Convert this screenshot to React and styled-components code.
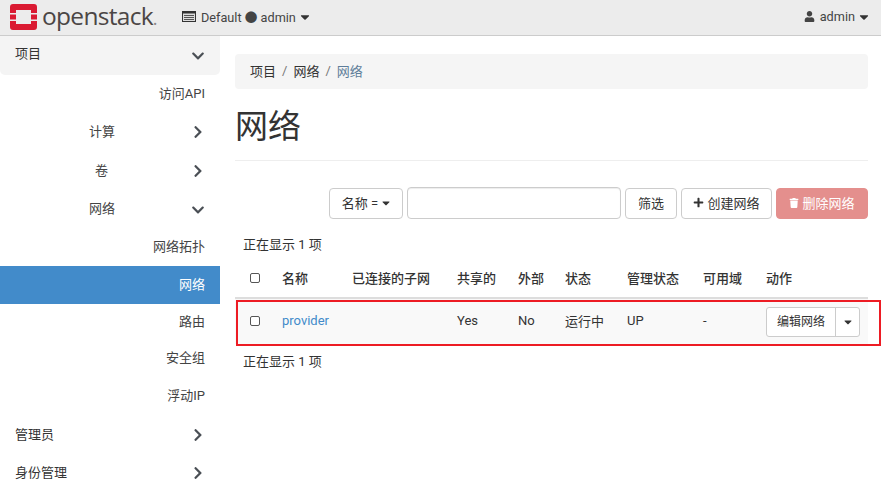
import React from "react";
import styled, { createGlobalStyle } from "styled-components";
import { FaChevronDown, FaChevronRight, FaUser, FaPlus, FaTrash, FaCaretDown } from "react-icons/fa";

const Global = createGlobalStyle`
  html, body { margin: 0; padding: 0; background: #fff; }
  body { font-family: Roboto, "Noto Sans CJK SC", sans-serif; font-size: 13px; color: #333; overflow: hidden; }
  * { box-sizing: border-box; }
`;

const Page = styled.div`width: 881px; height: 485px; overflow: hidden; position: relative;`;

const Topbar = styled.header`
  height: 36px; display: flex; align-items: center; background: #ececec;
  border-bottom: 1px solid #ccc; padding: 0 12px 2px 10px;
`;
const Brand = styled.div`display: flex; align-items: center; gap: 5px; width: 172px;`;
const Wordmark = styled.span`
  font-family: "Open Sans", sans-serif; font-weight: 500; font-size: 24.5px; letter-spacing: -0.7px; color: #4b4645; line-height: 1;
`;
const Dot = styled.span`color: #8a8685; font-size: 18px;`;
const TopItem = styled.div`display: flex; align-items: center; gap: 5px; color: #444; font-size: 12.7px;`;
const Spacer = styled.div`flex: 1;`;
const TopCaret = styled(FaCaretDown)`font-size: 14px; color: #333; margin: 0 -2px 0 -3px;`;
const BtnCaret = styled(FaCaretDown)`font-size: 12px; color: #333;`;

const Layout = styled.div`display: flex;`;
const Sidebar = styled.nav`width: 220px; flex: none; display: flex; flex-direction: column;`;
const Group = styled.div`
  height: 39px; flex: none; display: flex; align-items: center; justify-content: space-between;
  padding: 0 15px ${p => p.$pb ?? 1}px; background: ${p => p.$open ? "#f4f4f4" : "transparent"};
  border-radius: 0 0 5px 5px;
`;
const Row = styled.div`
  height: ${p => p.$h}px; flex: none; display: flex; align-items: center; justify-content: flex-end;
  gap: ${p => p.$gap || 0}px; padding: 0 15px ${p => p.$pb ?? 1}px 0;
  background: ${p => p.$active ? "#428bca" : "transparent"};
  color: ${p => p.$active ? "#fff" : "#444"};
`;
const Chev = styled.span`
  width: 15px; display: flex; justify-content: center; color: #4a4f55; font-size: 14px;
  margin-top: ${p => p.$drop || 3}px;
`;

const Main = styled.main`flex: 1; padding: 18px 13px 0 15px; min-width: 0;`;
const Crumbs = styled.div`
  height: 35px; background: #f5f5f5; border-radius: 4px; display: flex; align-items: center; padding: 0 15px 2px; color: #333;
`;
const Sep = styled.span`color: #777; padding: 0 6px;`;
const CrumbLast = styled.span`color: #5e7d9a;`;
const Title = styled.h1`
  margin: 0; height: 72px; font-weight: 400; font-size: 33px; line-height: 75px; color: #333; border-bottom: 1px solid #eee;
`;
const Toolbar = styled.div`display: flex; justify-content: flex-end; gap: 4px; margin-top: 26px; height: 32px;`;
const Btn = styled.button`
  height: 31px; margin-top: 1px; width: ${p => p.$w}px; padding: 0 0 2px ${p => p.$pl || 0}px; display: flex; align-items: center; justify-content: center; gap: ${p => p.$gap ?? 3}px;
  font: inherit; color: ${p => p.$danger ? "#fff" : "#333"}; background: ${p => p.$danger ? "#e48f8d" : "#fff"};
  border: 1px solid ${p => p.$danger ? "#e48f8d" : "#ccc"}; border-radius: 4px;
`;
const SearchInput = styled.input`
  width: 214px; height: 32px; border: 1px solid #ccc; border-radius: 4px; padding: 0 8px; background: #fff;
  box-shadow: inset 0 1px 1px rgba(0,0,0,.075);
`;
const Count = styled.div`height: 18px; line-height: 18px; padding-left: 8px; color: #333; margin-top: ${p => p.$mt}px;`;
const Table = styled.table`width: 633px; border-collapse: collapse; table-layout: fixed; margin-top: 6px;`;
const Th = styled.th`
  padding: 0 0 2px 8px; height: 38px; text-align: left; font-weight: 500; color: #333; border-bottom: 2px solid #ddd;
  vertical-align: middle;
`;
const Td = styled.td`padding: 0 0 2px 8px; height: 46px; background: #f9f9f9; color: #333; vertical-align: middle;`;
const CheckCell = styled.div`display: flex; justify-content: center; padding-right: 8px;`;
const Check = styled.span`
  display: block; width: 10px; height: 10px; border: 1px solid #555; border-radius: 2px; background: #fff;
`;
const Link = styled.a`color: #428bca; text-decoration: none;`;
const BtnGroup = styled.div`
  display: flex; height: 30px; width: 94px; margin-top: 2px; border: 1px solid #ccc; border-radius: 3px; background: #fff;
`;
const EditBtn = styled.div`flex: 1; display: flex; align-items: center; justify-content: center; font-size: 12px; padding-bottom: 2px;`;
const CaretBtn = styled.div`width: 24px; display: flex; align-items: center; justify-content: center; border-left: 1px solid #ccc;`;
const Highlight = styled.div`
  position: absolute; left: 236px; top: 300px; width: 645px; height: 46px; border: 2px solid #ed1c24; pointer-events: none;
`;

const Logo = () => (
  <svg width="27" height="26" viewBox="0 0 27 26">
    <path fill="#da1a32" d="M3 0h21a3 3 0 0 1 3 3v6h-6V6H6v3H0V3a3 3 0 0 1 3-3z" />
    <path fill="#da1a32" d="M0 17h6v3h15v-3h6v6a3 3 0 0 1-3 3H3a3 3 0 0 1-3-3z" />
    <rect fill="#da1a32" x="0" y="10.5" width="6" height="5" />
    <rect fill="#da1a32" x="21" y="10.5" width="6" height="5" />
  </svg>
);
const ProjectIcon = () => (
  <svg width="14" height="11" viewBox="0 0 14 11">
    <rect x="0.5" y="0.5" width="13" height="10" fill="#ddd" stroke="#333" />
    <rect x="0" y="0" width="14" height="2.5" fill="#333" />
    <path d="M2 4.5h10M2 6.5h10M2 8.5h10" stroke="#555" strokeWidth="1" />
  </svg>
);

const columns = [39, 70, 105, 61, 47, 62, 76, 63, 110];
const heads = ["名称", "已连接的子网", "共享的", "外部", "状态", "管理状态", "可用域", "动作"];

export default function App() {
  return (
    <Page>
      <Global />
      <Topbar>
        <Brand><Logo /><Wordmark>openstack<Dot>.</Dot></Wordmark></Brand>
        <TopItem><ProjectIcon /> Default ● admin <TopCaret /></TopItem>
        <Spacer />
        <TopItem><FaUser size={11} /> admin <TopCaret /></TopItem>
      </Topbar>
      <Layout>
        <Sidebar>
          <Group $open $pb={6}>项目<Chev $drop={6}><FaChevronDown /></Chev></Group>
          <Row $h={37} $pb={3}>访问API</Row>
          <Row $h={38} $gap={75}>计算<Chev><FaChevronRight /></Chev></Row>
          <Row $h={39} $gap={82}>卷<Chev><FaChevronRight /></Chev></Row>
          <Row $h={38} $gap={75}>网络<Chev $drop={4}><FaChevronDown /></Chev></Row>
          <Row $h={39} $pb={3}>网络拓扑</Row>
          <Row $active $h={38} $pb={4}>网络</Row>
          <Row $h={35} $pb={3}>路由</Row>
          <Row $h={38} $pb={3}>安全组</Row>
          <Row $h={37} $pb={3}>浮动IP</Row>
          <Group>管理员<Chev><FaChevronRight /></Chev></Group>
          <Group $pb={3}>身份管理<Chev><FaChevronRight /></Chev></Group>
        </Sidebar>
        <Main>
          <Crumbs>项目<Sep>/</Sep>网络<Sep>/</Sep><CrumbLast>网络</CrumbLast></Crumbs>
          <Title>网络</Title>
          <Toolbar>
            <Btn $w={74} $gap={2} $pl={2}>名称 =<BtnCaret /></Btn>
            <SearchInput />
            <Btn $w={52}>筛选</Btn>
            <Btn $w={91}><FaPlus size={11} />创建网络</Btn>
            <Btn $w={92} $danger><FaTrash size={10} />删除网络</Btn>
          </Toolbar>
          <Count $mt={17}>正在显示 1 项</Count>
          <Table>
            <colgroup>{columns.map((w, i) => <col key={i} width={w} />)}</colgroup>
            <thead>
              <tr>
                <Th><CheckCell><Check /></CheckCell></Th>
                {heads.map(h => <Th key={h}>{h}</Th>)}
              </tr>
            </thead>
            <tbody>
              <tr>
                <Td><CheckCell><Check /></CheckCell></Td>
                <Td><Link>provider</Link></Td>
                <Td />
                <Td>Yes</Td>
                <Td>No</Td>
                <Td>运行中</Td>
                <Td>UP</Td>
                <Td>-</Td>
                <Td><BtnGroup><EditBtn>编辑网络</EditBtn><CaretBtn><BtnCaret /></CaretBtn></BtnGroup></Td>
              </tr>
            </tbody>
          </Table>
          <Count $mt={9}>正在显示 1 项</Count>
        </Main>
      </Layout>
      <Highlight />
    </Page>
  );
}
